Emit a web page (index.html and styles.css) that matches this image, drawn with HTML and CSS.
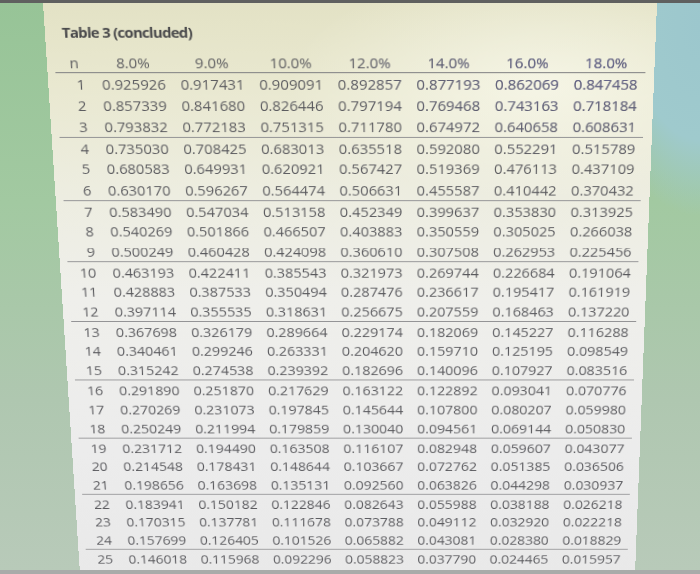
FILE: index.html
```html
<!DOCTYPE html>
<html>
<head>
<meta charset="utf-8">
<link rel="stylesheet" href="styles.css">
</head>
<body>
<div class="top-band"></div>
<div class="scene">
  <div class="paper">
    <h1 class="title">Table 3 (concluded)</h1>
    <div class="table">
      <div class="row head"><span class="n">n</span><span>8.0%</span><span>9.0%</span><span>10.0%</span><span>12.0%</span><span>14.0%</span><span>16.0%</span><span>18.0%</span></div>
      <div class="row"><span class="n">1</span><span>0.925926</span><span>0.917431</span><span>0.909091</span><span>0.892857</span><span>0.877193</span><span>0.862069</span><span>0.847458</span></div>
      <div class="row"><span class="n">2</span><span>0.857339</span><span>0.841680</span><span>0.826446</span><span>0.797194</span><span>0.769468</span><span>0.743163</span><span>0.718184</span></div>
      <div class="row"><span class="n">3</span><span>0.793832</span><span>0.772183</span><span>0.751315</span><span>0.711780</span><span>0.674972</span><span>0.640658</span><span>0.608631</span></div>
      <div class="row sep"><span class="n">4</span><span>0.735030</span><span>0.708425</span><span>0.683013</span><span>0.635518</span><span>0.592080</span><span>0.552291</span><span>0.515789</span></div>
      <div class="row"><span class="n">5</span><span>0.680583</span><span>0.649931</span><span>0.620921</span><span>0.567427</span><span>0.519369</span><span>0.476113</span><span>0.437109</span></div>
      <div class="row"><span class="n">6</span><span>0.630170</span><span>0.596267</span><span>0.564474</span><span>0.506631</span><span>0.455587</span><span>0.410442</span><span>0.370432</span></div>
      <div class="row sep"><span class="n">7</span><span>0.583490</span><span>0.547034</span><span>0.513158</span><span>0.452349</span><span>0.399637</span><span>0.353830</span><span>0.313925</span></div>
      <div class="row"><span class="n">8</span><span>0.540269</span><span>0.501866</span><span>0.466507</span><span>0.403883</span><span>0.350559</span><span>0.305025</span><span>0.266038</span></div>
      <div class="row"><span class="n">9</span><span>0.500249</span><span>0.460428</span><span>0.424098</span><span>0.360610</span><span>0.307508</span><span>0.262953</span><span>0.225456</span></div>
      <div class="row sep"><span class="n">10</span><span>0.463193</span><span>0.422411</span><span>0.385543</span><span>0.321973</span><span>0.269744</span><span>0.226684</span><span>0.191064</span></div>
      <div class="row"><span class="n">11</span><span>0.428883</span><span>0.387533</span><span>0.350494</span><span>0.287476</span><span>0.236617</span><span>0.195417</span><span>0.161919</span></div>
      <div class="row"><span class="n">12</span><span>0.397114</span><span>0.355535</span><span>0.318631</span><span>0.256675</span><span>0.207559</span><span>0.168463</span><span>0.137220</span></div>
      <div class="row sep"><span class="n">13</span><span>0.367698</span><span>0.326179</span><span>0.289664</span><span>0.229174</span><span>0.182069</span><span>0.145227</span><span>0.116288</span></div>
      <div class="row"><span class="n">14</span><span>0.340461</span><span>0.299246</span><span>0.263331</span><span>0.204620</span><span>0.159710</span><span>0.125195</span><span>0.098549</span></div>
      <div class="row"><span class="n">15</span><span>0.315242</span><span>0.274538</span><span>0.239392</span><span>0.182696</span><span>0.140096</span><span>0.107927</span><span>0.083516</span></div>
      <div class="row sep"><span class="n">16</span><span>0.291890</span><span>0.251870</span><span>0.217629</span><span>0.163122</span><span>0.122892</span><span>0.093041</span><span>0.070776</span></div>
      <div class="row"><span class="n">17</span><span>0.270269</span><span>0.231073</span><span>0.197845</span><span>0.145644</span><span>0.107800</span><span>0.080207</span><span>0.059980</span></div>
      <div class="row"><span class="n">18</span><span>0.250249</span><span>0.211994</span><span>0.179859</span><span>0.130040</span><span>0.094561</span><span>0.069144</span><span>0.050830</span></div>
      <div class="row sep"><span class="n">19</span><span>0.231712</span><span>0.194490</span><span>0.163508</span><span>0.116107</span><span>0.082948</span><span>0.059607</span><span>0.043077</span></div>
      <div class="row"><span class="n">20</span><span>0.214548</span><span>0.178431</span><span>0.148644</span><span>0.103667</span><span>0.072762</span><span>0.051385</span><span>0.036506</span></div>
      <div class="row"><span class="n">21</span><span>0.198656</span><span>0.163698</span><span>0.135131</span><span>0.092560</span><span>0.063826</span><span>0.044298</span><span>0.030937</span></div>
      <div class="row sep"><span class="n">22</span><span>0.183941</span><span>0.150182</span><span>0.122846</span><span>0.082643</span><span>0.055988</span><span>0.038188</span><span>0.026218</span></div>
      <div class="row"><span class="n">23</span><span>0.170315</span><span>0.137781</span><span>0.111678</span><span>0.073788</span><span>0.049112</span><span>0.032920</span><span>0.022218</span></div>
      <div class="row"><span class="n">24</span><span>0.157699</span><span>0.126405</span><span>0.101526</span><span>0.065882</span><span>0.043081</span><span>0.028380</span><span>0.018829</span></div>
      <div class="row sep"><span class="n">25</span><span>0.146018</span><span>0.115968</span><span>0.092296</span><span>0.058823</span><span>0.037790</span><span>0.024465</span><span>0.015957</span></div>
      <div class="row"><span class="n">26</span><span>0.135202</span><span>0.106393</span><span>0.083905</span><span>0.052521</span><span>0.033149</span><span>0.021091</span><span>0.013523</span></div>
    </div>
  </div>
</div>
<div class="bottom-band"></div>
</body>
</html>
```
FILE: styles.css
```css
html, body {
  margin: 0;
  padding: 0;
}
body {
  width: 700px;
  height: 574px;
  overflow: hidden;
  background: #b4c8b5;
  font-family: "Open Sans", "Liberation Sans", sans-serif;
}
.top-band {
  height: 3px;
  background: #5f605f;
}
.scene {
  height: 567px;
  overflow: hidden;
  background:
    radial-gradient(ellipse 110px 190px at 100% 4%, #9cc7cd 0%, #9fcacd 60%, rgba(160,205,205,0) 100%),
    linear-gradient(to bottom, #97c497 0%, #a2c9a1 35%, #afc7b0 70%, #b8cab9 100%);
}
.paper {
  margin-left: 43px;
  width: 614px;
  height: 690px;
  box-sizing: border-box;
  padding: 19px 0 0 8px;
  transform-origin: 0 0;
  transform: matrix3d(1,0,0,0, 0.0648,1,0,0.0001683, 0,0,1,0, 0,0,0,1);
  background:
    radial-gradient(ellipse 260px 120px at 82% 12%, rgba(250,250,238,0.7), rgba(250,250,238,0) 100%),
    linear-gradient(to bottom, #e3e2c5 0%, #e9e8d0 12%, #edede0 28%, #efefeb 45%, #ececec 70%, #e8e8e8 100%);
}
.title {
  margin: 0 0 0 9px;
  font-size: 15px;
  line-height: 20px;
  font-weight: 700;
  letter-spacing: -0.7px;
  color: #4a4a4c;
}
.table {
  margin-top: 11.5px;
  width: 597px;
  font-size: 15.2px;
  color: transparent;
  background:
    radial-gradient(ellipse 260px 100px at 90% 2%, rgba(100,100,145,1) 0%, rgba(100,100,145,0) 100%),
    #5a5a5e;
  -webkit-background-clip: text;
  background-clip: text;
}
.row {
  display: grid;
  grid-template-columns: 39px repeat(7, 1fr);
  align-items: center;
  height: 22.1px;
  line-height: 22px;
  box-sizing: border-box;
  text-align: center;
  white-space: nowrap;
}
.row .n {
  text-align: right;
  padding-right: 9.5px;
}
.row.head {
  height: 20.5px;
  line-height: 19px;
  border-bottom: 1.5px solid #7d7d80;
}
.row.head .n {
  padding-right: 15px;
}
.row.sep {
  border-top: 1.5px solid #909092;
}
.bottom-band {
  height: 4px;
  background: #a9aba9;
}
```
